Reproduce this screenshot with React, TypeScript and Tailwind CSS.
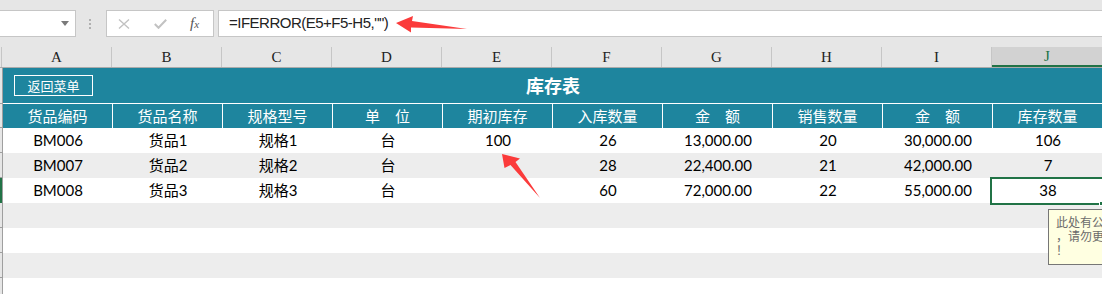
import React from "react"

const COLS = ["A", "B", "C", "D", "E", "F", "G", "H", "I", "J"]

const HEADERS = ["货品编码", "货品名称", "规格型号", "单　位", "期初库存", "入库数量", "金　额", "销售数量", "金　额", "库存数量"]

const ROWS: string[][] = [
  ["BM006", "货品1", "规格1", "台", "100", "26", "13,000.00", "20", "30,000.00", "106"],
  ["BM007", "货品2", "规格2", "台", "", "28", "22,400.00", "21", "42,000.00", "7"],
  ["BM008", "货品3", "规格3", "台", "", "60", "72,000.00", "22", "55,000.00", "38"],
  ["", "", "", "", "", "", "", "", "", ""],
  ["", "", "", "", "", "", "", "", "", ""],
  ["", "", "", "", "", "", "", "", "", ""],
  ["", "", "", "", "", "", "", "", "", ""],
]

const cjk = { fontFamily: "'Noto Sans CJK SC', sans-serif" }
const dataFont = { fontFamily: "Lato, 'Noto Sans CJK SC', sans-serif" }

const FormulaBar: React.FC = () => (
  <div className="h-[47px] bg-[#e6e6e6] flex items-start pt-[10px]">
    {/* 名称框 */}
    <div className="w-[76px] h-[27px] bg-white border border-l-0 border-[#c6c6c6] flex items-center justify-end pr-[6px]">
      <svg width="8" height="5" viewBox="0 0 8 5">
        <polygon points="0,0 8,0 4,5" fill="#7a7a7a" />
      </svg>
    </div>
    <div className="ml-[13px] h-[27px] flex flex-col justify-center gap-[2px]">
      <div className="w-[2px] h-[2px] bg-[#b0b0b0]" />
      <div className="w-[2px] h-[2px] bg-[#b0b0b0]" />
      <div className="w-[2px] h-[2px] bg-[#b0b0b0]" />
    </div>
    <div className="ml-[15px] w-[108px] h-[27px] bg-white border border-[#c6c6c6] flex items-center">
      <svg className="ml-[11px]" width="12" height="10" viewBox="0 0 12 10">
        <path d="M1 0.5 L11 9.5 M11 0.5 L1 9.5" stroke="#c2c2c2" strokeWidth="1.4" />
      </svg>
      <svg className="ml-[24px]" width="13" height="10" viewBox="0 0 13 10">
        <path d="M0.8 5 L4.5 8.8 L12.2 0.8" stroke="#c2c2c2" strokeWidth="2" fill="none" />
      </svg>
      <span
        className="ml-[23px] text-[#555] italic text-[15px] leading-none"
        style={{ fontFamily: "'Liberation Serif', serif" }}
      >
        f<span className="text-[11px]">x</span>
      </span>
    </div>
    <div className="ml-[4px] flex-1 h-[27px] bg-white border border-r-0 border-[#c6c6c6] flex items-center pl-[10px]">
      <span className="text-[15px] text-[#222] tracking-[-0.5px]" style={{ fontFamily: "'Liberation Sans', sans-serif" }}>
        =IFERROR(E5+F5-H5,"")
      </span>
    </div>
  </div>
)

const ColumnHeader: React.FC = () => (
  <div className="h-[21px] flex bg-[#e6e6e6] border-b border-[#ababab]">
    <div className="w-[3px] border-r border-[#c6c6c6]" />
    {COLS.map((c) => {
      const active = c === "J"
      return (
        <div
          key={c}
          className={
            active
              ? "w-[110px] shrink-0 bg-[#d2d2d2] border-b-2 border-[#217346] text-[#217346] flex items-center justify-center text-[15px]"
              : "w-[110px] shrink-0 border-r border-[#c6c6c6] text-[#222] flex items-center justify-center text-[15px]"
          }
          style={{ fontFamily: "'Liberation Serif', serif" }}
        >
          {c}
        </div>
      )
    })}
  </div>
)

const ROW_HEIGHTS = [25, 25, 25, 25, 25, 25, 25]

const RowStrip: React.FC = () => (
  <div className="w-[3px] shrink-0 flex flex-col bg-[#e6e6e6] border-r border-[#9f9f9f]">
    <div className="h-[36px] border-b border-[#9f9f9f]" />
    <div className="h-[24px] border-b border-[#9f9f9f]" />
    {ROW_HEIGHTS.map((h, i) => (
      <div
        key={i}
        className={i === 2 ? "h-[25px] bg-[#217346]" : "h-[25px] border-b border-[#9f9f9f]"}
      />
    ))}
  </div>
)

export default function App() {
  return (
    <div className="relative w-[1102px] h-[294px] overflow-hidden bg-white">
      <FormulaBar />
      <ColumnHeader />
      <div className="flex">
        <RowStrip />
        <div className="w-[1100px] shrink-0">
          {/* 标题行 */}
          <div className="h-[36px] bg-[#1e859e] border-b border-white grid grid-cols-[1fr_auto_1fr] items-center">
            <div className="pl-[11px]">
              <div
                className="w-[79px] h-[21px] border border-white text-white text-[13px] flex items-center justify-center"
                style={cjk}
              >
                返回菜单
              </div>
            </div>
            <div className="text-white text-[18px] font-bold" style={cjk}>
              库存表
            </div>
            <div />
          </div>
          {/* 表头 */}
          <div className="h-[24px] bg-[#1e859e] flex">
            {HEADERS.map((h, i) => (
              <div
                key={i}
                className="w-[110px] shrink-0 border-r border-white text-white text-[15px] flex items-center justify-center whitespace-pre"
                style={cjk}
              >
                {h}
              </div>
            ))}
          </div>
          {ROWS.map((row, r) => (
            <div key={r} className={r % 2 === 1 ? "h-[25px] flex bg-[#ededed]" : "h-[25px] flex bg-white"}>
              {row.map((v, c) => (
                <div
                  key={c}
                  className="relative w-[110px] shrink-0 flex items-center justify-center text-[15px] text-black"
                  style={dataFont}
                >
                  {v}
                  {r === 2 && c === 9 && (
                    <>
                      <div className="absolute left-[-3px] top-[-1px] right-[-2px] bottom-[-2px] border-2 border-[#217346]" />
                      <div className="absolute right-[-1px] bottom-[-3px] w-[5px] h-[5px] bg-[#217346] border border-white" />
                    </>
                  )}
                </div>
              ))}
            </div>
          ))}
        </div>
      </div>

      {/* 批注提示 */}
      <div
        className="absolute left-[1048px] top-[209px] w-[84px] h-[56px] bg-[#ffffe1] border border-[#767676] pl-[7px] pt-[5px] text-[12px] leading-[14px] text-[#6b6b6b]"
        style={cjk}
      >
        <div className="whitespace-nowrap">此处有公式</div>
        <div className="whitespace-nowrap">，请勿更改</div>
        <div>！</div>
      </div>

      {/* 红色箭头 */}
      <svg className="absolute left-0 top-0 pointer-events-none" width="1102" height="294">
        <polygon points="396,23 413,16 412,21 467,29 411,27.5 411,32.5" fill="#fb3b3b" />
        <polygon points="502,154 520,158.5 515.5,162 540,198 510.5,165 504.5,168" fill="#fb3b3b" />
      </svg>
    </div>
  )
}
